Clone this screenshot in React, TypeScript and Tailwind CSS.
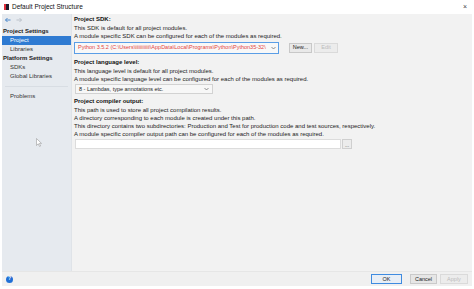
import React from 'react';

const font = { fontFamily: '"Liberation Sans", Arial, sans-serif' };

const NavItem: React.FC<{ label: string; selected?: boolean; header?: boolean }> = ({ label, selected, header }) => {
  if (header) {
    return <div className="h-[9px] flex items-center pl-[1px] font-bold text-[6px] text-[#222]">{label}</div>;
  }
  return (
    <div
      className={`h-[9px] flex items-center pl-[8px] text-[6px] ${
        selected ? 'bg-[#2f7bd2] text-white' : 'text-[#333]'
      }`}
    >
      {label}
    </div>
  );
};

const Desc: React.FC<{ children: React.ReactNode }> = ({ children }) => (
  <div className="h-[8px] leading-[8px] text-[6px] text-[#222] whitespace-nowrap">{children}</div>
);

const Heading: React.FC<{ children: React.ReactNode }> = ({ children }) => (
  <div className="h-[9px] leading-[9px] text-[6px] font-bold text-[#111] whitespace-nowrap">{children}</div>
);

const Chevron: React.FC = () => (
  <svg width="5" height="4" viewBox="0 0 5 4" className="shrink-0">
    <path d="M0.5 1 L2.5 3 L4.5 1" stroke="#666" strokeWidth="0.7" fill="none" />
  </svg>
);

export default function App() {
  return (
    <div className="w-[474px] h-[289px] bg-white flex flex-col overflow-hidden" style={font}>
      {/* title bar */}
      <div className="h-[14px] flex items-center px-[4px] bg-white shrink-0">
        <div className="w-[5px] h-[6px] bg-[#1d1d2b] border-l-[2px] border-[#e0303c] mr-[3px]" />
        <span className="text-[6.5px] text-[#111]">Default Project Structure</span>
        <span className="ml-auto mr-[3px] text-[7px] text-[#444]">×</span>
      </div>

      {/* body */}
      <div className="flex-1 flex pl-[2px] pr-[2px] min-h-0">
        {/* sidebar */}
        <div className="w-[70px] bg-[#e6eaef] flex flex-col border-r border-[#dfe3e8]">
          <div className="h-[10px] flex items-center gap-[5px] pl-[3px] mt-[1px]">
            <svg width="6" height="6" viewBox="0 0 6 6">
              <path d="M0.5 3 H5.5 M0.5 3 L2.5 1 M0.5 3 L2.5 5" stroke="#3c7fc7" strokeWidth="0.9" fill="none" />
            </svg>
            <svg width="6" height="6" viewBox="0 0 6 6">
              <path d="M5.5 3 H0.5 M5.5 3 L3.5 1 M5.5 3 L3.5 5" stroke="#b8bec6" strokeWidth="0.9" fill="none" />
            </svg>
          </div>
          <div className="mt-[2px]">
            <NavItem header label="Project Settings" />
            <NavItem selected label="Project" />
            <NavItem label="Libraries" />
            <NavItem header label="Platform Settings" />
            <NavItem label="SDKs" />
            <NavItem label="Global Libraries" />
          </div>
          <div className="h-[1px] bg-[#d8dde3] mx-[3px] mt-[5px] mb-[5px]" />
          <NavItem label="Problems" />
          <div className="relative flex-1">
            <svg width="6" height="9" viewBox="0 0 6 9" className="absolute left-[34px] top-[37px]">
              <path d="M0.5 0.5 V7.5 L2.2 5.8 L3.6 8.5 L4.6 8 L3.3 5.4 H5.5 Z" fill="#fff" stroke="#888" strokeWidth="0.5" />
            </svg>
          </div>
        </div>

        {/* main */}
        <div className="flex-1 bg-[#f2f2f2] pl-[2px] pt-[1px]">
          <Heading>Project SDK:</Heading>
          <Desc>This SDK is default for all project modules.</Desc>
          <Desc>A module specific SDK can be configured for each of the modules as required.</Desc>
          <div className="flex items-center gap-[10px] mt-[1px] h-[13px]">
            <div className="w-[205px] h-[12px] border border-[#5b9ee6] bg-[#f8f8f8] flex items-center pl-[3px] pr-[2px]">
              <span className="text-[5.5px] text-[#e4433d] whitespace-nowrap flex-1 min-w-0">
                Python 3.5.2 (C:\Users\iiiiiiiiiiii\AppData\Local\Programs\Python\Python35-32\
              </span>
              <Chevron />
            </div>
            <div className="flex gap-[2px]">
              <div className="w-[23px] h-[10px] border border-[#c8c8c8] bg-[#e9e9e9] flex items-center justify-center text-[5.5px] text-[#222]">
                New...
              </div>
              <div className="w-[24px] h-[10px] border border-[#dadada] bg-[#ececec] flex items-center justify-center text-[5.5px] text-[#bbb]">
                Edit
              </div>
            </div>
          </div>
          <div className="mt-[4px]">
            <Heading>Project language level:</Heading>
            <Desc>This language level is default for all project modules.</Desc>
            <Desc>A module specific language level can be configured for each of the modules as required.</Desc>
          </div>
          <div className="w-[138px] h-[10px] mt-[1px] ml-[1px] border border-[#d2d2d2] bg-[#f7f7f7] flex items-center pl-[3px] pr-[3px]">
            <span className="text-[5.5px] text-[#222] flex-1 whitespace-nowrap">8 - Lambdas, type annotations etc.</span>
            <Chevron />
          </div>
          <div className="mt-[3px]">
            <Heading>Project compiler output:</Heading>
            <Desc>This path is used to store all project compilation results.</Desc>
            <Desc>A directory corresponding to each module is created under this path.</Desc>
            <Desc>This directory contains two subdirectories: Production and Test for production code and test sources, respectively.</Desc>
            <Desc>A module specific compiler output path can be configured for each of the modules as required.</Desc>
          </div>
          <div className="flex items-center mt-[1px] ml-[1px]">
            <div className="w-[266px] h-[10px] bg-white border border-[#dcdcdc]" />
            <div className="w-[10px] h-[10px] border border-[#cfcfcf] bg-[#ececec] flex items-end justify-center text-[5px] leading-[6px] text-[#444] ml-[1px]">
              ...
            </div>
          </div>
        </div>
      </div>

      {/* bottom bar */}
      <div className="h-[15px] mx-[2px] bg-[#f0f0f0] border-t border-[#e6e6e6] flex items-center pl-[4px] pr-[4px] shrink-0">
        <div className="w-[7px] h-[7px] rounded-full bg-[#1f6fd6] flex items-center justify-center text-white text-[5px] font-bold">
          ?
        </div>
        <div className="ml-auto flex gap-[3px]">
          <div className="w-[31px] h-[10px] border border-[#3f8be0] bg-[#e8eef6] flex items-center justify-center text-[5.5px] text-[#222]">
            OK
          </div>
          <div className="w-[27px] h-[10px] border border-[#cacaca] bg-[#e6e6e6] flex items-center justify-center text-[5.5px] text-[#222] ml-[5px]">
            Cancel
          </div>
          <div className="w-[28px] h-[10px] border border-[#dadada] bg-[#ececec] flex items-center justify-center text-[5.5px] text-[#bbb]">
            Apply
          </div>
        </div>
      </div>
      <div className="h-[3px] bg-white shrink-0" />
    </div>
  );
}
